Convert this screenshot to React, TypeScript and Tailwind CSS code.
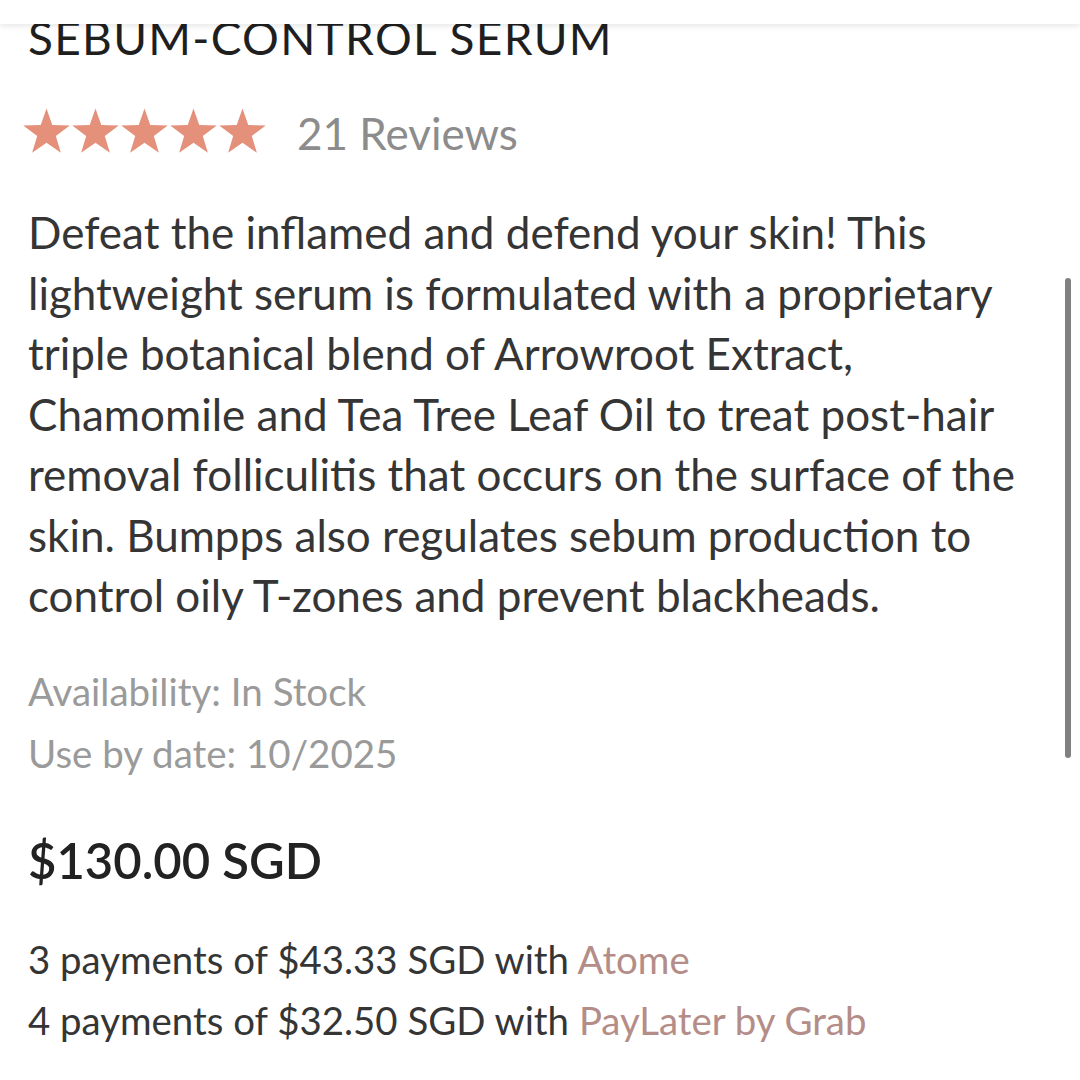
import React from "react";

const Star = () => (
  <svg viewBox="0 0 50 47" className="h-[46px] w-[49px]" fill="#e4907b">
    <polygon points="25,0.5 30.88,17.41 48.78,17.77 34.51,28.59 39.69,45.73 25,35.5 10.31,45.73 15.49,28.59 1.22,17.77 19.12,17.41" />
  </svg>
);

const description = [
  "Defeat the inflamed and defend your skin! This",
  "lightweight serum is formulated with a proprietary",
  "triple botanical blend of Arrowroot Extract,",
  "Chamomile and Tea Tree Leaf Oil to treat post-hair",
  "removal folliculitis that occurs on the surface of the",
  "skin. Bumpps also regulates sebum production to",
  "control oily T-zones and prevent blackheads.",
];

export default function App() {
  return (
    <div className="relative h-[1080px] w-[1080px] overflow-hidden bg-white font-['Lato','Liberation_Sans',sans-serif]">
      {/* top bar */}
      <div className="absolute left-0 top-0 z-10 h-[24px] w-full bg-white shadow-[0_2px_6px_rgba(0,0,0,0.10)]"></div>
      {/* scrollbar */}
      <div className="absolute right-[9px] top-[278px] h-[480px] w-[6px] rounded-full bg-[#808080]"></div>

      <div className="px-[28px]">
        <h1 className="pt-[15px] text-[46px] leading-none tracking-[1.3px] text-[#1f1f1f]">
          SEBUM-CONTROL SERUM
        </h1>

        <div className="mt-[47px] flex items-start">
          <div className="-ml-[6px] flex">
            <Star />
            <Star />
            <Star />
            <Star />
            <Star />
          </div>
          <span className="ml-[30px] text-[44px] leading-[50px] text-[#8c8c8c]">
            21 Reviews
          </span>
        </div>

        <p className="mt-[44px] text-[44px] leading-[60.5px] text-[#353535]">
          {description.map((line) => (
            <span key={line} className="block whitespace-nowrap">
              {line}
            </span>
          ))}
        </p>

        <div className="mt-[34px] text-[38.5px] leading-[62px] text-[#9a9a9a]">
          <div>Availability: In Stock</div>
          <div>Use by date: 10/2025</div>
        </div>

        <div className="mt-[52px] text-[49px] font-semibold leading-none text-[#222222]">
          $130.00 SGD
        </div>

        <div className="mt-[44px] text-[38.4px] leading-[61px] text-[#353535]">
          <div>
            3 payments of $43.33 SGD with{" "}
            <span className="text-[#b48d88]">Atome</span>
          </div>
          <div>
            4 payments of $32.50 SGD with{" "}
            <span className="text-[#b48d88]">PayLater by Grab</span>
          </div>
        </div>
      </div>
    </div>
  );
}
